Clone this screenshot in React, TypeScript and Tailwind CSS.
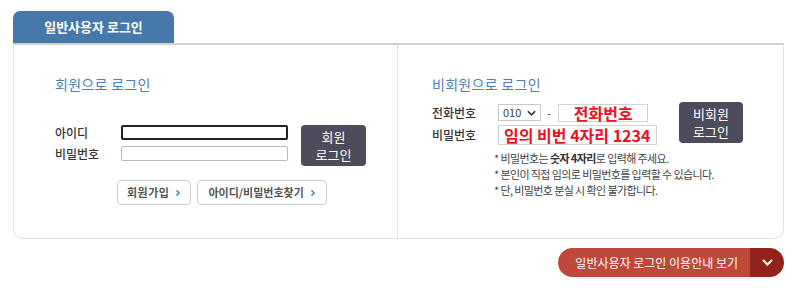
import React from "react";

const font = { fontFamily: '"Noto Sans CJK KR", "Noto Sans", sans-serif' };

const Chevron = ({ className }: { className?: string }) => (
  <svg className={className} viewBox="0 0 8 10" fill="none" stroke="currentColor" strokeWidth={2}>
    <path d="M2 1.5L5.5 5L2 8.5" />
  </svg>
);

const MemberLogin: React.FC = () => (
  <div className="w-[384px] shrink-0 border-r border-[#e2e2e2] pl-[41px] pt-[29px]">
    <h3 className="text-[14px] leading-[20px] text-[#4d7fbb] tracking-[0.3px]">회원으로 로그인</h3>
    <div className="flex items-start mt-[31px]">
      <div className="w-[66px] text-[12px] font-medium text-[#333] leading-[21px] -mt-[3px]">
        <div>아이디</div>
        <div>비밀번호</div>
      </div>
      <div className="flex flex-col gap-[6px] w-[167px]">
        <input className="h-[15px] border-2 border-[#222] rounded-[2px] outline-none" />
        <input type="password" className="h-[15px] border border-[#b8b8b8] rounded-[2px] outline-none" />
      </div>
      <button className="ml-[13px] w-[65px] h-[41px] rounded-[4px] bg-[#4e4b5d] text-white text-[13px] leading-[18px]">
        회원
        <br />
        로그인
      </button>
    </div>
    <div className="flex gap-[6px] ml-[62px] mt-[14px]">
      <button className="flex items-center gap-[6px] h-[25px] px-[9px] border border-[#cfcfcf] rounded-[4px] text-[11px] font-semibold text-[#555] tracking-[0.5px]">
        회원가입
        <Chevron className="w-[6px] h-[8px] text-[#3d8ad6]" />
      </button>
      <button className="flex items-center gap-[6px] h-[25px] px-[10px] border border-[#cfcfcf] rounded-[4px] text-[11px] font-semibold text-[#555]">
        아이디/비밀번호찾기
        <Chevron className="w-[6px] h-[8px] text-[#3d8ad6]" />
      </button>
    </div>
  </div>
);

const GuestLogin: React.FC = () => (
  <div className="flex-1 min-w-0 pl-[34px] pt-[29px]">
    <h3 className="text-[14px] leading-[20px] text-[#4d7fbb] tracking-[0.3px]">비회원으로 로그인</h3>
    <div className="flex items-start mt-[10px]">
      <div className="w-[225px] shrink-0">
        <div className="flex items-center h-[17px]">
          <span className="w-[66px] text-[12px] font-medium text-[#333]">전화번호</span>
          <div className="flex items-center justify-between w-[43px] h-[17px] border border-[#c8c8c8] px-[4px] text-[11px] text-[#444]">
            010
            <svg className="w-[9px] h-[6px]" viewBox="0 0 10 6" fill="none" stroke="#333" strokeWidth={1.8}>
              <path d="M1 1l4 4 4-4" />
            </svg>
          </div>
          <span className="ml-[6px] text-[12px] text-[#555]">-</span>
          <div className="ml-[7px] w-[90px] h-[18px] border border-[#d2d2d2] flex items-center justify-center text-[16px] font-bold text-[#f0101c] leading-none">
            전화번호
          </div>
        </div>
        <div className="flex items-center h-[20px] mt-[4px]">
          <span className="w-[66px] text-[12px] font-medium text-[#333]">비밀번호</span>
          <div className="w-[159px] h-[20px] border border-[#d2d2d2] flex items-center pl-[5px] text-[16px] font-bold text-[#f0101c] leading-none whitespace-nowrap">
            임의 비번 4자리 1234
          </div>
        </div>
        <ul className="ml-[62px] mt-[5px] text-[11px] leading-[16px] text-[#444] tracking-[-0.6px] whitespace-nowrap">
          <li>* 비밀번호는 <b className="text-[#333]">숫자 4자리</b>로 입력해 주세요.</li>
          <li>* 본인이 직접 임의로 비밀번호를 입력할 수 있습니다.</li>
          <li>* 단, 비밀번호 분실 시 확인 불가합니다.</li>
        </ul>
      </div>
      <button className="shrink-0 ml-[22px] mt-[-2px] w-[64px] h-[41px] rounded-[4px] bg-[#4e4b5d] text-white text-[13px] leading-[18px]">
        비회원
        <br />
        로그인
      </button>
    </div>
  </div>
);

export default function App() {
  return (
    <div className="w-[800px] h-[296px] bg-white pt-[11px] pl-[13px] pr-[16px]" style={font}>
      <div className="w-[161px] h-[32px] rounded-t-[7px] bg-[#4778ac] flex items-center justify-center text-white text-[13px] font-bold">
        일반사용자 로그인
      </div>
      <div className="h-[196px] border-t-2 border-t-[#d2d2d2] border-x border-b border-[#e2e2e2] rounded-b-[10px] flex">
        <MemberLogin />
        <GuestLogin />
      </div>
      <div className="flex justify-end mt-[9px]">
        <button className="flex h-[29px] rounded-full overflow-hidden text-white text-[12px]">
          <span className="flex items-center bg-[#c0483a] pl-[17px] pr-[12px]">일반사용자 로그인 이용안내 보기</span>
          <span className="flex items-center justify-center w-[34px] bg-[#912119]">
            <svg className="w-[11px] h-[7px]" viewBox="0 0 11 7" fill="none" stroke="white" strokeWidth={2}>
              <path d="M1 1l4.5 4.5L10 1" />
            </svg>
          </span>
        </button>
      </div>
    </div>
  );
}
